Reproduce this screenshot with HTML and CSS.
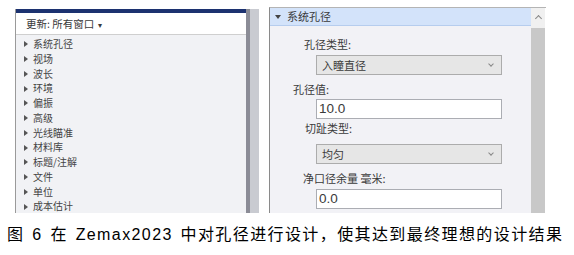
FILE: index.html
```html
<!DOCTYPE html>
<html lang="zh-CN">
<head>
    <meta charset="UTF-8">
    <title>系统孔径</title>
    <link rel="stylesheet" href="styles.css">
</head>
<body>
    <div class="shot">
        <div class="left-panel">
            <div class="navy-bar"></div>
            <div class="update-row">更新: 所有窗口 <span class="caret">▾</span></div>
            <ul class="tree">
                <li><span class="tri"></span>系统孔径</li>
                <li><span class="tri"></span>视场</li>
                <li><span class="tri"></span>波长</li>
                <li><span class="tri"></span>环境</li>
                <li><span class="tri"></span>偏振</li>
                <li><span class="tri"></span>高级</li>
                <li><span class="tri"></span>光线瞄准</li>
                <li><span class="tri"></span>材料库</li>
                <li><span class="tri"></span>标题/注解</li>
                <li><span class="tri"></span>文件</li>
                <li><span class="tri"></span>单位</li>
                <li><span class="tri"></span>成本估计</li>
            </ul>
        </div>
        <div class="splitter"><div class="splitter-dark"></div><div class="splitter-light"></div></div>
        <div class="right-panel">
            <div class="editor">
                <div class="section-head"><span class="tri-down"></span>系统孔径</div>
                <div class="label l1">孔径类型:</div>
                <div class="combo c1">入瞳直径<span class="chev"></span></div>
                <div class="label l2">孔径值:</div>
                <div class="field f2">10.0</div>
                <div class="label l3">切趾类型:</div>
                <div class="combo c3">均匀<span class="chev"></span></div>
                <div class="label l4">净口径余量 毫米:</div>
                <div class="field f4">0.0</div>
            </div>
            <div class="scrollbar">
                <div class="scroll-up"><span class="up-chev"></span></div>
            </div>
        </div>
    </div>
    <p class="caption">图 6 在 Zemax2023 中对孔径进行设计，使其达到最终理想的设计结果</p>
</body>
</html>
```

FILE: styles.css
```css
body {
    margin: 0;
    background: #fff;
    font-family: "Noto Sans CJK SC", "Liberation Sans", sans-serif;
    color: #333;
}
.shot {
    display: flex;
    height: 213px;
    padding-left: 15px;
    box-sizing: border-box;
    overflow: hidden;
}
.left-panel {
    width: 231px;
    margin-top: 9px;
    background: #f1f2f5;
    border-left: 1px solid #9a9a9a;
    box-sizing: border-box;
}
.navy-bar {
    height: 4px;
    background: #1c3270;
}
.update-row {
    height: 21px;
    line-height: 21px;
    padding-left: 10px;
    background: #fff;
    border-bottom: 1px solid #cfcfcf;
    font-size: 10.5px;
    color: #3a3a3a;
}
.caret {
    font-size: 8px;
    margin-left: 1px;
}
.tree {
    list-style: none;
    margin: 0;
    padding: 2px 0 0 0;
}
.tree li {
    height: 14.75px;
    line-height: 14.75px;
    font-size: 10px;
    color: #444;
    display: flex;
    align-items: center;
}
.tri {
    width: 0;
    height: 0;
    border-top: 3px solid transparent;
    border-bottom: 3px solid transparent;
    border-left: 4px solid #555;
    margin-left: 8px;
    margin-right: 5px;
}
.splitter {
    display: flex;
    margin-top: 9px;
    margin-right: 10px;
}
.splitter-dark {
    width: 4px;
    background: #8b8c96;
}
.splitter-light {
    width: 9px;
    background: #c9cbd1;
}
.right-panel {
    display: flex;
    width: 276px;
    margin-top: 7px;
    border-top: 1px solid #b4b4b4;
    border-left: 1px solid #8a8a8a;
}
.editor {
    width: 261px;
    background: #f2f2f6;
    font-size: 11px;
    color: #3a3a3a;
}
.section-head {
    height: 17px;
    line-height: 17px;
    background: #d3e3fa;
    border-bottom: 1px solid #b6cdee;
    display: flex;
    align-items: center;
    font-size: 11px;
}
.tri-down {
    width: 0;
    height: 0;
    border-left: 3px solid transparent;
    border-right: 3px solid transparent;
    border-top: 4px solid #444;
    margin-left: 5px;
    margin-right: 6px;
}
.label {
    height: 16px;
    line-height: 16px;
}
.l1 { margin: 10px 0 3px 34px; }
.l2 { margin: 6px 0 2px 23px; }
.l3 { margin: 1px 0 8px 35px; }
.l4 { margin: 6px 0 3px 33px; }
.combo, .field {
    width: 186px;
    height: 20px;
    margin-left: 46px;
    box-sizing: border-box;
    line-height: 18px;
    position: relative;
}
.combo {
    background: #e6e6e6;
    border: 1px solid #acacac;
    padding-left: 5px;
}
.field {
    background: #fff;
    border: 1px solid #abadb3;
    padding-left: 2px;
    font-family: "Liberation Sans", sans-serif;
    font-size: 13.5px;
}
.chev {
    position: absolute;
    right: 8px;
    top: 6px;
    width: 3px;
    height: 3px;
    border-right: 1px solid #888;
    border-bottom: 1px solid #888;
    transform: rotate(45deg);
}
.scrollbar {
    width: 14px;
    background: #c8c8c8;
}
.scroll-up {
    height: 20px;
    background: #f0f0f0;
    display: flex;
    justify-content: center;
    padding-top: 8px;
    box-sizing: border-box;
}
.up-chev {
    width: 4px;
    height: 4px;
    border-left: 1px solid #888;
    border-top: 1px solid #888;
    transform: rotate(45deg);
}
.caption {
    margin: 8px 0 0 7px;
    font-family: "Liberation Sans", "Noto Sans CJK SC", sans-serif;
    font-size: 16px;
    letter-spacing: 1.4px;
    word-spacing: 2px;
    color: #000;
    white-space: nowrap;
}
```
